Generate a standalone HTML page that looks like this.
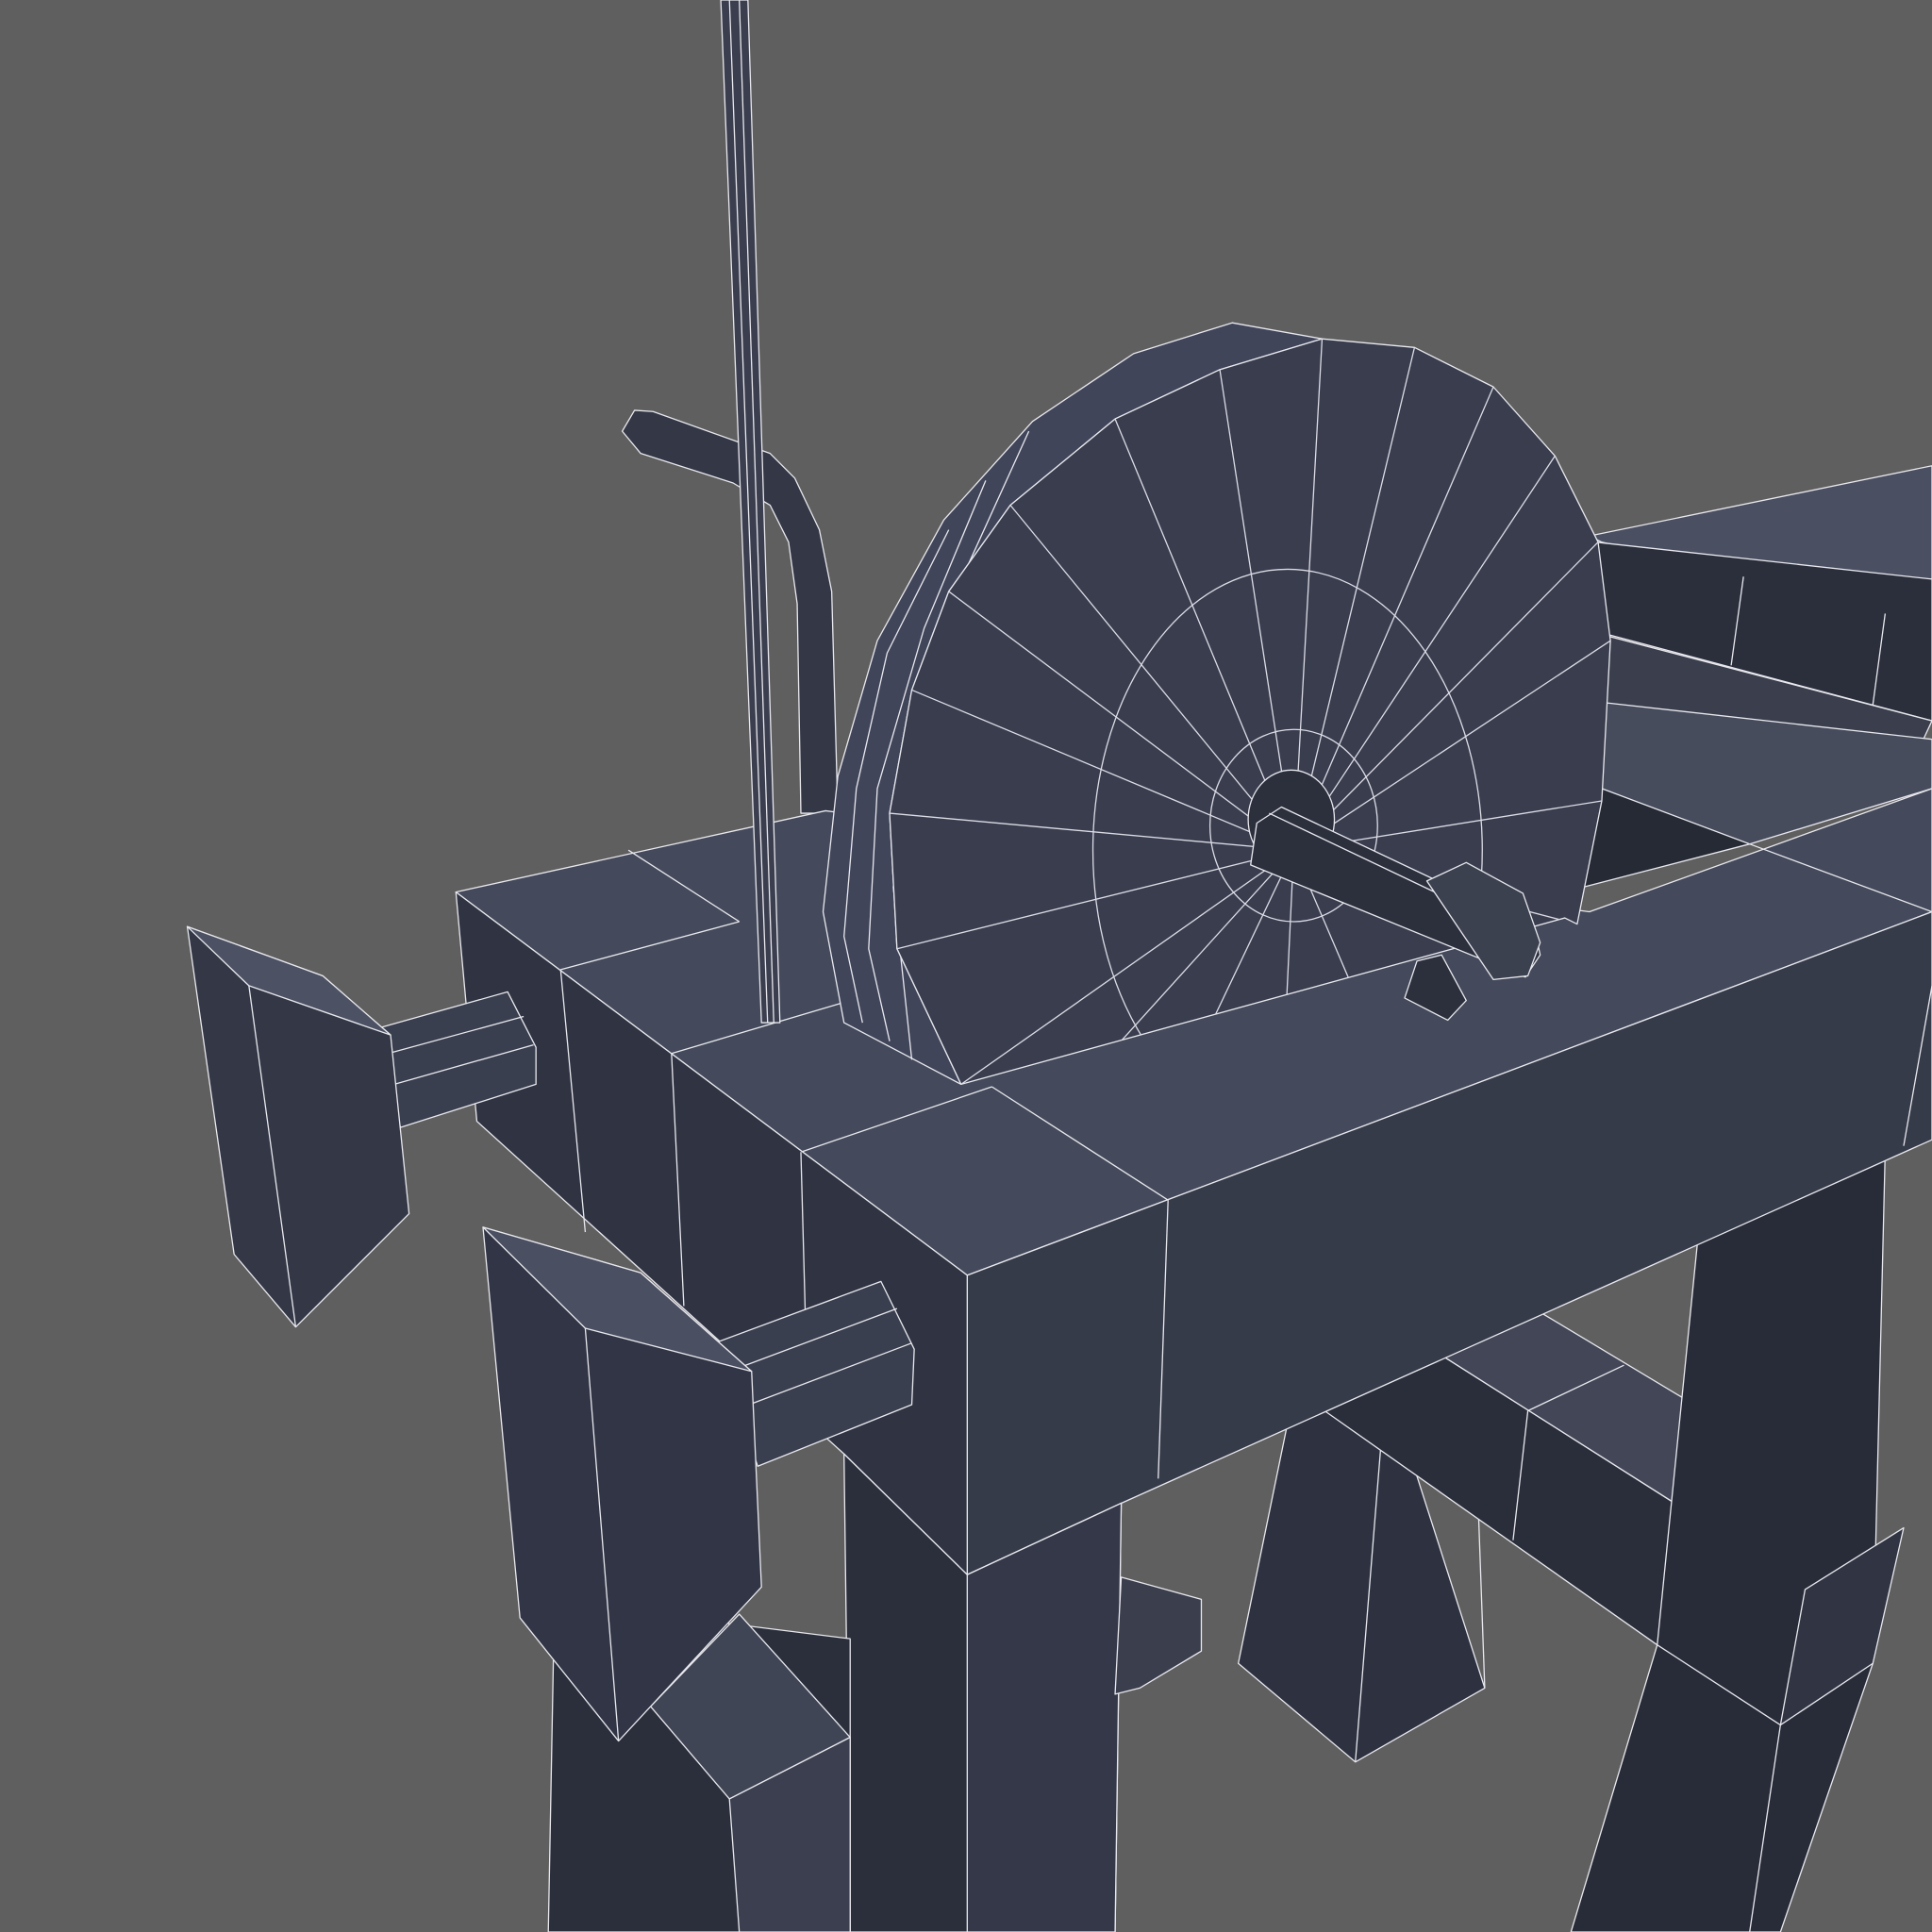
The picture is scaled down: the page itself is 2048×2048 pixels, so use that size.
<!DOCTYPE html>
<html><head><style>html,body{margin:0;padding:0;background:#5f5f5f;width:2048px;height:2048px;overflow:hidden}svg{display:block}</style></head>
<body>
<svg width="2048" height="2048" viewBox="0 0 1568 1568" xmlns="http://www.w3.org/2000/svg">
<defs>
<clipPath id="face"><polygon points="1073,275 1148,282 1212,314 1262,370 1297,440 1307,520 1300,650 1280,750 1270,745 780,880 728,770 722,660 740,560 770,480 820,410 905,340 990,300"/></clipPath>
</defs>
<rect width="1568" height="1568" fill="#5f5f5f"/>
<g stroke="#e8e8ee" stroke-width="1" stroke-linejoin="round">
<polygon points="1290,435 1568,378 1568,470 1415,468 1300,440" fill="#4a4f61"/>
<polygon points="1295,440 1568,470 1568,585 1305,515" fill="#2b2f3c"/>
<line x1="1415" y1="468" x2="1405" y2="540"/><line x1="1530" y1="498" x2="1520" y2="572"/>
<polygon points="1300,515 1568,585 1540,645 1300,570" fill="#3a3e4d"/>
<polygon points="1290,640 1420,685 1568,640 1568,600 1300,570" fill="#474c5d"/>
<polygon points="1285,720 1300,640 1420,685" fill="#262a35"/>
<polygon points="1045,1155 1125,1120 1205,1370 1100,1430 1005,1350" fill="#2d3140"/>
<line x1="1125" y1="1120" x2="1100" y2="1430"/><line x1="1200" y1="1230" x2="1205" y2="1370"/>
<polygon points="1075,1145 1170,1100 1375,1230 1345,1335" fill="#2a2e3a"/>
<polygon points="1170,1100 1250,1065 1375,1140 1375,1230" fill="#424656"/>
<line x1="1240" y1="1145" x2="1228" y2="1250"/><line x1="1240" y1="1145" x2="1318" y2="1108"/>
<polygon points="1380,985 1530,935 1520,1350 1445,1568 1275,1568 1345,1335" fill="#282c38"/>
<polygon points="1465,1290 1545,1240 1520,1350 1445,1400" fill="#313543"/>
<line x1="1345" y1="1335" x2="1445" y2="1400"/><line x1="1445" y1="1400" x2="1420" y2="1568"/>
<path d="M505,350 L515,333 L530,334 L625,368 L645,388 L665,430 L675,480 L680,660 L650,660 L647,490 L640,440 L625,410 L595,392 L520,368 Z" fill="#333746"/>
<polygon points="370,724 670,658 1290,740 1568,640 1568,740 785,1035" fill="#444a5b"/>
<line x1="455" y1="787" x2="600" y2="748"/><line x1="545" y1="855" x2="690" y2="812"/>
<line x1="650" y1="935" x2="805" y2="882"/><line x1="805" y1="882" x2="948" y2="974"/>
<line x1="510" y1="690" x2="600" y2="748"/><line x1="1420" y1="685" x2="1568" y2="740"/>
<polygon points="1000,262 1073,275 990,300 905,340 820,410 770,480 740,560 722,660 728,770 780,880 685,830 668,740 680,630 712,520 766,422 838,342 920,287" fill="#40455a"/>
<g fill="none">
<path d="M770,430 L720,530 L695,640 L685,760 L700,830 M800,390 L750,510 L712,640 L705,770 L722,845 M835,350 L785,460 L740,590 L725,720 L740,860"/>
</g>
<polygon points="1073,275 1148,282 1212,314 1262,370 1297,440 1307,520 1300,650 1280,750 1270,745 780,880 728,770 722,660 740,560 770,480 820,410 905,340 990,300" fill="#393d4e"/>
<g clip-path="url(#face)" fill="none" stroke="#dcdce6">
<ellipse cx="1045" cy="690" rx="158" ry="228"/>
<ellipse cx="1050" cy="670" rx="68" ry="78"/>
<path d="M1050,690 L905,340 M1050,690 L990,300 M1050,690 L1073,275 M1050,690 L1148,282 M1050,690 L1212,314 M1050,690 L1262,370 M1050,690 L1297,440 M1050,690 L1307,520 M1050,690 L1300,650 M1050,690 L1280,750 M1050,690 L820,410 M1050,690 L770,480 M1050,690 L740,560 M1050,690 L722,660 M1050,690 L728,770 M1050,690 L780,880 M1050,690 L860,900 M1050,690 L950,900 M1050,690 L1040,900 M1050,690 L1140,900"/>
</g>
<ellipse cx="1048" cy="665" rx="35" ry="40" fill="#2c303d"/>
<polygon points="1020,668 1040,655 1245,752 1250,775 1238,793 1015,702" fill="#2c303d"/>
<line x1="1030" y1="660" x2="1240" y2="760" />
<polygon points="1158,715 1190,700 1236,725 1250,765 1240,792 1212,795" fill="#3c4150"/>
<polygon points="1140,810 1175,828 1190,812 1170,775 1150,780" fill="#2c303d"/>
<polygon points="785,1035 1568,740 1568,925 910,1220 785,1278" fill="#363b4a"/>
<line x1="948" y1="974" x2="940" y2="1200"/><line x1="1568" y1="800" x2="1545" y2="930"/>
<polygon points="370,724 785,1035 785,1278 685,1180 387,910" fill="#2f3342"/>
<line x1="455" y1="787" x2="475" y2="1000"/><line x1="545" y1="855" x2="555" y2="1060"/><line x1="650" y1="935" x2="655" y2="1120"/>
<polygon points="685,1180 785,1278 910,1220 905,1568 690,1568" fill="#2b2f3c"/>
<polygon points="785,1278 910,1220 905,1568 785,1568" fill="#343848"/>
<polygon points="910,1280 975,1298 975,1340 925,1370 905,1375" fill="#3a3e4d"/>
<polygon points="450,1300 690,1330 690,1568 445,1568" fill="#2b2f3c"/>
<polygon points="528,1385 600,1310 690,1410 592,1460" fill="#404555"/>
<polygon points="592,1460 690,1410 690,1568 600,1568" fill="#3b3f4f"/>
<polygon points="585,0 607,0 633,830 618,830" fill="#3a3e4e"/>
<line x1="592" y1="0" x2="623" y2="830"/><line x1="600" y1="0" x2="628" y2="830"/>
<polygon points="305,835 412,805 435,850 435,880 325,915" fill="#3a3f4f"/>
<line x1="315" y1="855" x2="425" y2="825"/><line x1="320" y1="880" x2="433" y2="848"/>
<polygon points="152,752 262,792 317,840 332,985 240,1077 190,1018" fill="#333746"/>
<polygon points="152,752 262,792 317,840 202,800" fill="#4c5163"/>
<line x1="202" y1="800" x2="240" y2="1077"/>
<polygon points="580,1090 715,1040 742,1095 740,1140 615,1190" fill="#3a3f4f"/>
<line x1="600" y1="1110" x2="728" y2="1062"/><line x1="608" y1="1140" x2="740" y2="1090"/>
<polygon points="392,996 520,1033 610,1113 618,1288 502,1413 422,1313" fill="#313545"/>
<polygon points="392,996 520,1033 610,1113 475,1078" fill="#4a4f61"/>
<line x1="475" y1="1078" x2="502" y2="1413"/>
</g>
</svg>
</body></html>
